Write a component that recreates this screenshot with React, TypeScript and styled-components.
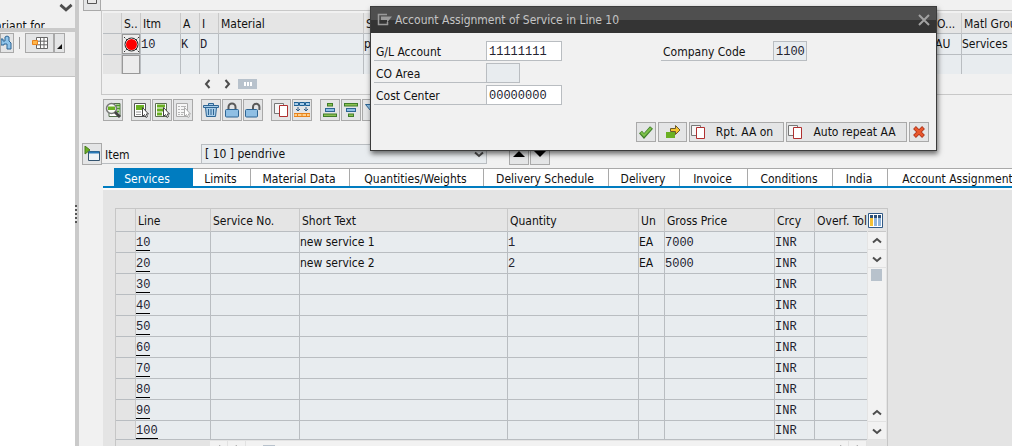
import React from "react";
import styled, { createGlobalStyle, css } from "styled-components";

const LINE = "#b9bdc1";
const sans = `"DejaVu Sans Condensed", "DejaVu Sans", Tahoma, sans-serif`;
const mono = `"Liberation Mono", "Courier New", monospace`;

const GlobalStyle = createGlobalStyle`
  *, *::before, *::after { box-sizing: border-box; }
  body {
    margin: 0;
    background: #f1f1f1;
    color: #111;
    font: 12px/16px ${sans};
    overflow: hidden;
  }
  button, input, select { font: inherit; color: inherit; margin: 0; padding: 0; border-radius: 0; }
  svg { display: block; flex: none; }
`;

/* ---------- page frame ---------- */

const Page = styled.div`
  position: relative;
  display: grid;
  grid-template-columns: 75px 4px minmax(0, 1fr);
  height: 100vh;
  overflow: hidden;
`;

const Sidebar = styled.aside`
  display: flex;
  flex-direction: column;
  background: #fff;
`;

const SideHeader = styled.div`
  display: flex;
  align-items: flex-start;
  justify-content: space-between;
  height: 32px;
  padding-right: 2px;
  border-bottom: 4px solid #cacaca;
  background: #f0f0f0;
  overflow: hidden;
`;

const SideTitle = styled.div`
  display: flex;
  justify-content: flex-end;
  width: 45px;
  padding-top: 18px;
  white-space: nowrap;
  overflow: hidden;
`;

const SideTools = styled.div`
  display: flex;
  align-items: flex-start;
  height: 26px;
  padding-top: 1px;
  background: #f0f0f0;
`;

const SideBand = styled.div`
  height: 19px;
  background: #e2e2e2;
  border-bottom: 1px solid #c4c4c4;
`;

const Separator = styled.div`
  width: 1px;
  height: 12px;
  margin: 4px 5px 0;
  background: #999;
`;

const Splitter = styled.div`
  background: #cacaca;
  padding-top: 205px;
`;

const Grip = styled.div`
  width: 2px;
  height: 18px;
  background: repeating-linear-gradient(#555 0 2px, #e8e8e8 2px 4px);
`;

const Main = styled.main`
  display: flex;
  flex-direction: column;
  background: #f1f1f1;
`;

/* ---------- buttons ---------- */

const ToolButton = styled.button<{ $w?: number; $h?: number }>`
  display: inline-flex;
  align-items: center;
  justify-content: center;
  flex: none;
  width: ${(p) => p.$w ?? 20}px;
  height: ${(p) => p.$h ?? 22}px;
  border: 1px solid #a9a9a9;
  background: #e4e5e6;
`;

const FlatButton = styled.button`
  display: flex;
  align-items: center;
  justify-content: center;
  border: 0;
  background: transparent;
`;

/* ---------- item overview ---------- */

const TopStrip = styled.div`
  display: flex;
  align-items: flex-end;
  height: 11px;
  padding-left: 4px;
  overflow: hidden;
`;

const TopRule = styled.div`
  flex: 1;
  border-bottom: 1px solid #c8c8c8;
`;

const Overview = styled.section`
  margin-left: 22px;
  padding: 2px 0 0 1px;
  border-left: 1px solid #c8c8c8;
  border-bottom: 1px solid #c8c8c8;
  overflow: hidden;
`;

const Grid = styled.table<{ $head: number }>`
  width: 100%;
  table-layout: fixed;
  border-collapse: separate;
  border-spacing: 0;
  white-space: nowrap;

  th, td {
    height: 21px;
    padding: 0;
    overflow: hidden;
    text-align: left;
    font-weight: 400;
    border-right: 1px solid ${LINE};
    border-bottom: 1px solid ${LINE};
    background: #e8ecef;
  }
  thead th {
    height: ${(p) => p.$head}px;
    padding: 1px 0 0 2px;
    background: #e5e5e5;
    border-right-color: #c9c9c9;
  }
  tbody th { background: #e4e4e4; border-right-color: #c9c9c9; }
  th:last-child, td:last-child { border-right: 0; }
  tbody tr:last-child > * { height: 19px; }
`;

const OverviewGrid = styled(Grid)`
  tbody tr:last-child > * { border-bottom: 0; }
`;

const Status = styled.div<{ $h: number }>`
  display: flex;
  align-items: center;
  justify-content: center;
  height: ${(p) => p.$h}px;
  border: 1px solid #999;
  background: #ececec;
`;

const Mono = styled.span`
  font-family: ${mono};
  color: #23232f;
`;

const HScroll = styled.div`
  display: flex;
  align-items: center;
  height: 20px;
  padding-left: 95px;
  button { width: 19px; }
`;

const HThumb = styled.div`
  display: flex;
  align-items: center;
  justify-content: center;
  gap: 1px;
  width: 19px;
  height: 10px;
  margin-left: 2px;
  background: #b8c2cc;
  i { width: 2px; height: 4px; background: #fff; }
`;

/* ---------- toolbar + item selector ---------- */

const Toolbar = styled.div`
  display: flex;
  gap: 8px;
  margin: 4px 0 0 24px;
`;

const ToolGroup = styled.div`
  display: flex;
  gap: 1px;
`;

const ItemRow = styled.div`
  display: flex;
  margin: 22px 0 0 3px;
`;

const ItemLabel = styled.label`
  width: 99px;
  height: 21px;
  padding: 4px 0 0 3px;
  border-bottom: 1px solid ${LINE};
`;

const SelectBox = styled.div`
  display: grid;
  align-items: center;
  width: 286px;
  height: 20px;
  margin: 1px 22px 0 0;
  border: 1px solid ${LINE};
  background: #e8ecef;
  > * { grid-area: 1 / 1; }
  svg { justify-self: end; margin-right: 2px; pointer-events: none; }
`;

const Select = styled.select`
  appearance: none;
  width: 100%;
  height: 18px;
  padding-left: 3px;
  border: 0;
  background: transparent;
`;

/* ---------- tabs ---------- */

const Tabs = styled.nav`
  display: flex;
  margin: 3px 0 0 24px;
  padding-left: 11px;
  border-bottom: 2px solid #007cc0;
  overflow: hidden;
`;

const Tab = styled.button<{ $w: number; $active?: boolean }>`
  flex: none;
  width: ${(p) => p.$w}px;
  height: 18px;
  padding: 2px 2px 0 0;
  border: 0;
  border-top: 1px solid #a9a9a9;
  border-right: 1px solid #a9a9a9;
  background: #fff;
  white-space: nowrap;
  ${(p) =>
    p.$active &&
    css`
      background: #007cc0;
      border-color: #007cc0;
      color: #fff;
      padding-right: 12px;
    `}
`;

const TabPanel = styled.section`
  flex: 1;
  margin-left: 24px;
  padding: 18px 124px 0 12px;
  border-top: 2px solid #fafafa;
  background: #e4e4e4;
`;

const ServiceFrame = styled.div`
  border: 1px solid #c6c6c6;
  border-bottom: 0;
`;

const FrameRow = styled.div`
  display: flex;
`;

const LineLink = styled.a`
  display: inline-block;
  height: 15px;
  line-height: 15px;
  border-bottom: 1px solid #000;
  color: #23232f;
  font-family: ${mono};
  text-decoration: none;
`;

const Rail = styled.div`
  display: flex;
  flex-direction: column;
  flex: none;
  width: 20px;
  padding: 0 1px;
`;

const RailHead = styled.div`
  display: flex;
  align-items: center;
  height: 23px;
  border-bottom: 1px solid #c9c9c9;
`;

const RailTrack = styled.div`
  display: flex;
  flex-direction: column;
  flex: 1;
  background: #f2f2f2;
`;

const RailButton = styled(FlatButton)`
  height: 18px;
  border-bottom: 1px solid #e2e2e2;
`;

const RailThumb = styled.div`
  width: 11px;
  height: 12px;
  margin: 1px auto auto 3px;
  background: #b8c2cc;
`;

const BottomScroll = styled.div`
  display: flex;
  justify-content: space-between;
  height: 18px;
  margin: 1px 20px 0 94px;
  background: #f2f2f2;
`;

const BottomGroup = styled.div`
  display: flex;
  align-items: center;
  button { width: 18px; height: 18px; border-right: 1px solid #e2e2e2; }
`;

const BottomThumb = styled.div`
  width: 12px;
  height: 10px;
  margin-left: 17px;
  background: #b8c2cc;
`;

/* ---------- dialog ---------- */

const Dialog = styled.form`
  position: absolute;
  top: 6px;
  left: 370px;
  width: 567px;
  border: 1px solid #3c3c3c;
  background: #f1f1f1;
  box-shadow: 1px 3px 5px rgba(0, 0, 0, 0.55);
`;

const TitleBar = styled.header`
  display: flex;
  align-items: center;
  height: 26px;
  padding: 0 6px;
  background: linear-gradient(#4f4f4f 0 13px, #343434 13px);
  color: #c4c4c4;
`;

const Title = styled.h1`
  flex: 1;
  margin: 0 0 0 2px;
  font: inherit;
`;

const Fields = styled.div`
  display: grid;
  grid-template-columns: 287px 1fr;
  row-gap: 2px;
  padding: 8px 3px 0;
`;

const Field = styled.div`
  display: flex;
  grid-column-start: 1;
  &:nth-child(2) { grid-column-start: 2; }
`;

const FieldLabel = styled.label`
  width: 112px;
  height: 20px;
  padding: 3px 0 0 2px;
  border-bottom: 1px solid ${LINE};
`;

const FieldInput = styled.input<{ $w: number }>`
  width: ${(p) => p.$w}px;
  height: 20px;
  padding: 1px 0 0 2px;
  border: 1px solid ${LINE};
  background: #fff;
  font-family: ${mono};
  color: #23232f;
  &:read-only { background: #e8ecef; }
`;

const Actions = styled.footer`
  display: flex;
  justify-content: flex-end;
  gap: 2px;
  padding: 17px 7px 8px;
`;

const TextButton = styled(ToolButton)`
  justify-content: flex-start;
  white-space: nowrap;
  span { flex: 1; text-align: center; }
`;

/* ---------- icons ---------- */

type Dir = "up" | "down" | "left" | "right";
const chevrons: Record<Dir, string> = {
  up: "M1 6.5 5 3l4 3.5",
  down: "M1 3.5 5 7l4-3.5",
  left: "M6.5 1 3 5l3.5 4",
  right: "M3.5 1 7 5l-3.5 4",
};
const Chevron = ({ dir, size = 10 }: { dir: Dir; size?: number }) => (
  <svg width={size} height={size} viewBox="0 0 10 10" fill="none" stroke="#4d4d4d" strokeWidth="2">
    <path d={chevrons[dir]} />
  </svg>
);

const Icon = ({ children, w = 16 }: { children: React.ReactNode; w?: number }) => (
  <svg width={w} height="16" viewBox={`0 0 ${w} 16`} fill="none">
    {children}
  </svg>
);

const Cursor = ({ stroke = "#444" }) => (
  <path d="M9.5 5.5v9l2-2 1.500 3 1.500-1-1.200-2.500h2.200z" fill="#fff" stroke={stroke} />
);

const DetailIcon = () => (
  <Icon>
    <path d="M6 1.500h9v13H4V10" fill="#fff" stroke="#55704c" />
    <path d="M11 3.500h4M12 6.500h3M12 9.500h2" stroke="#4f9b27" strokeWidth="2" />
    <circle cx="6.500" cy="6.500" r="5" fill="#f7fbf5" stroke="#777" strokeWidth="1.500" />
    <path d="M3 4.500h7v3.500H3z" fill="#6ab023" />
    <path d="m10 10 5 5" stroke="#444" strokeWidth="3" />
  </Icon>
);

const SelectAllIcon = () => (
  <Icon>
    <path d="M1.500 1.500h11v13h-11z" fill="#fff" stroke="#555" />
    <path d="M3 3h8v5H3z" fill="#6ab023" />
    <path d="M3 10h5M3 12.500h5" stroke="#999" />
    <Cursor />
  </Icon>
);

const SelectBlockIcon = () => (
  <Icon>
    <path d="M1.500 1.500h11v13h-11z" fill="#fff" stroke="#5b6f50" />
    <path d="M3 4h8M3 8h6M3 12h5" stroke="#6ab023" strokeWidth="3" />
    <Cursor />
  </Icon>
);

const DeselectIcon = () => (
  <Icon>
    <path d="M1.500 1.500h11v13h-11z" fill="#f6f6f6" stroke="#aaa" />
    <path d="M3 4.500h2m1 0h5M3 7.500h2m1 0h3M3 10.500h2m1 0h3M3 12.500h2m1 0h2" stroke="#b5b5b5" />
    <Cursor stroke="#aaa" />
  </Icon>
);

const TrashIcon = () => (
  <Icon>
    <path d="M2.500 5.500h11l-1 9h-9z" fill="#a9cde9" stroke="#2d6594" />
    <path d="M.5 3.500h15v2H.5zM5.500 3V1.500h5V3" fill="#a9cde9" stroke="#2d6594" />
    <path d="M5.500 7v6M8 7v6M10.500 7v6" stroke="#2d6594" />
  </Icon>
);

const LockIcon = ({ open = false }) => (
  <Icon>
    <path
      d={open ? "M8 7V5a3.200 3.200 0 0 1 6.400 0v3" : "M4.500 8V5a3.500 3.500 0 0 1 7 0v3"}
      stroke="#5a5a5a"
      strokeWidth="2"
    />
    <rect x={open ? 0.5 : 1.5} y="7.500" width={open ? 12 : 13} height="7.500" rx="1" fill="#8fbfe4" stroke="#2d6594" />
  </Icon>
);

const CopyIcon = () => (
  <Icon>
    <path d="M6 11.500H1.500v-10h9V3" fill="#f6f6f6" stroke="#777" />
    <path d="M6.500 3.500h8v11h-8z" fill="#fff" stroke="#b03030" />
  </Icon>
);

const InsertIcon = () => (
  <Icon>
    <path d="M0 .5h4.500v3H0zm5.500 0h5v3h-5zm6 0H16v3h-4.500z" fill="#a9cde9" stroke="#1d5f93" />
    <path d="M4 5v4M2 7l2 2 2-2M12 5v4M10 7l2 2 2-2" stroke="#2d5b86" />
    <path d="M0 11.500h16v3H0z" fill="#ffd08a" stroke="#e8821c" />
    <path d="M3.500 11v4M8 11v4M12.500 11v4" stroke="#e8821c" />
  </Icon>
);

const SortIcon = ({ desc = false }) => (
  <Icon>
    <g transform={desc ? "matrix(1 0 0 -1 0 16)" : undefined}>
      <rect x="5.500" y="1.500" width="5" height="2.500" fill="#8cc152" stroke="#3f7d2a" />
      <rect x="3.500" y="6.500" width="9" height="3" fill="#8fbfe4" stroke="#2d6594" />
      <rect x="1.500" y="12" width="13" height="2.500" fill="#8cc152" stroke="#3f7d2a" />
    </g>
  </Icon>
);

const FilterIcon = () => (
  <Icon>
    <path d="M1.500 2.500h13l-5 6v6l-3-2v-4z" fill="#8fbfe4" stroke="#2d6594" />
  </Icon>
);

const HeaderDataIcon = () => (
  <Icon>
    <path d="M1 0v8l5-4z" fill="#6ab023" stroke="#477b1c" />
    <path d="M4.500 5.500h11v9h-11z" fill="#f1f3f5" stroke="#33536f" />
    <path d="M5 6.500h10" stroke="#2a7ab8" strokeWidth="2" />
  </Icon>
);

const FindIcon = () => (
  <svg width="12" height="16" viewBox="0 0 12 16">
    <path d="M0 4h2v2h2V2l2-1 2 1v4l2 2v6H6V9H3v1H0z" fill="#8fc4ea" stroke="#2d6594" />
  </svg>
);

const LayoutIcon = () => (
  <Icon>
    <path d="M4.500 2.500h11v11h-11zM8.500 2v12M12 2v12M4 6.200h12M4 9.800h12" fill="#fff" stroke="#666" />
    <path d="M.5 5.500h5v4h-5z" fill="#ffb74a" stroke="#e8821c" />
  </Icon>
);

const ErrorLight = () => (
  <svg width="17" height="17" viewBox="0 0 17 17">
    <path d="M1 1l3 3M16 1l-3 3M1 16l3-3M16 16l-3-3" stroke="#333" strokeDasharray="1.500 1" />
    <circle cx="8.500" cy="8.500" r="6.500" fill="#fff" stroke="#222" />
    <circle cx="8.500" cy="8.500" r="5.500" fill="#f00" />
  </svg>
);

const BoxIcon = () => (
  <Icon>
    <path d="M3.500 2.500h9v9h-9z" fill="#e9e9e9" stroke="#555" />
  </Icon>
);

const Triangle = ({ down = false }) => (
  <svg width="12" height="6" viewBox="0 0 12 6">
    <path d={down ? "M0 0h12L6 6z" : "M0 6h12L6 0z"} fill="#000" />
  </svg>
);

const ConfigIcon = () => (
  <svg width="15" height="15" viewBox="0 0 15 15">
    <path d="M.5.5h14v14H.5z" fill="#fff" stroke="#315a86" />
    <path d="M2 2h3v3H2zm4 0h3v3H6zm4 0h3v3h-3z" fill="#2b4f78" />
    <path d="M2 5h3v8H2z" fill="#f5c033" />
    <path d="M6 5h3v8H6zm4 0h3v8h-3z" fill="#8fb3d9" />
  </svg>
);

const CheckIcon = () => (
  <Icon>
    <path d="m2.500 8 3.500 4L13.500 3.500" stroke="#3f7d2a" strokeWidth="4" />
    <path d="m3 8.300 3 3.200L13 4" stroke="#7cc04a" strokeWidth="2.200" />
  </Icon>
);

const ContinueIcon = () => (
  <Icon>
    <path d="M1 8h9v6H1z" fill="#6ab023" />
    <path d="M5.500 4.500h5v-3l4.500 4.500-4.500 4.500v-3h-5z" fill="#f7c431" stroke="#6b5a2a" />
  </Icon>
);

const CancelIcon = () => (
  <Icon>
    <path d="m3.500 3.500 9 9m0-9-9 9" stroke="#a8321a" strokeWidth="4" />
    <path d="m4 4 8 8m0-8-8 8" stroke="#e8572c" strokeWidth="2.500" />
  </Icon>
);

const WindowIcon = () => (
  <Icon>
    <path d="M10 2.500H1.500v10h9V10" stroke="#9a9a9a" strokeWidth="1.500" />
    <path d="M4 4.500h11L10 10.500V8H4z" fill="#9a9a9a" />
  </Icon>
);

const CloseIcon = () => (
  <svg width="12" height="12" viewBox="0 0 12 12" stroke="#a2a2a2" strokeWidth="2">
    <path d="m1 1 10 10M11 1 1 11" />
  </svg>
);

/* ---------- data ---------- */

const toolGroups: [string, React.ReactNode][][] = [
  [["Details", <DetailIcon />]],
  [
    ["Select all", <SelectAllIcon />],
    ["Select block", <SelectBlockIcon />],
    ["Deselect all", <DeselectIcon />],
  ],
  [
    ["Delete", <TrashIcon />],
    ["Lock", <LockIcon />],
    ["Unlock", <LockIcon open />],
  ],
  [
    ["Copy", <CopyIcon />],
    ["Insert", <InsertIcon />],
  ],
  [
    ["Sort ascending", <SortIcon />],
    ["Sort descending", <SortIcon desc />],
    ["Filter", <FilterIcon />],
  ],
];

const tabs: [string, number][] = [
  ["Services", 79],
  ["Limits", 58],
  ["Material Data", 99],
  ["Quantities/Weights", 134],
  ["Delivery Schedule", 125],
  ["Delivery", 71],
  ["Invoice", 68],
  ["Conditions", 85],
  ["India", 55],
  ["Account Assignment", 142],
];

const services = Array.from({ length: 10 }, (_, i) => ({
  line: (i + 1) * 10,
  text: ["new service 1", "new service 2"][i],
  qty: ["1", "2"][i],
  unit: i < 2 ? "EA" : "",
  price: ["7000", "5000"][i],
}));

/* ---------- sections ---------- */

const SidePane = () => (
  <Sidebar>
    <SideHeader>
      <SideTitle>ariant for</SideTitle>
      <FlatButton type="button" aria-label="Collapse">
        <Chevron dir="down" size={14} />
      </FlatButton>
    </SideHeader>
    <SideTools>
      <ToolButton type="button" aria-label="Find" $w={14} $h={20}>
        <FindIcon />
      </ToolButton>
      <Separator />
      <ToolButton type="button" aria-label="Layout" $w={29} $h={20}>
        <LayoutIcon />
      </ToolButton>
      <ToolButton type="button" aria-label="Layout options" $w={11} $h={20}>
        <svg width="5" height="14" viewBox="0 0 5 14">
          <path d="M5 8v5H0z" fill="#111" />
        </svg>
      </ToolButton>
    </SideTools>
    <SideBand />
  </Sidebar>
);

const ItemOverview = () => (
  <Overview>
    <OverviewGrid $head={21}>
      <colgroup>
        {[19, 19, 40, 19, 19, 145, 571, 27].map((w, i) => (
          <col key={i} width={w} />
        ))}
        <col />
      </colgroup>
      <thead>
        <tr>
          <th />
          <th>S..</th>
          <th>Itm</th>
          <th>A</th>
          <th>I</th>
          <th>Material</th>
          <th>Short Text</th>
          <th>O...</th>
          <th>Matl Group</th>
        </tr>
      </thead>
      <tbody>
        <tr>
          <th />
          <td>
            <Status $h={20}>
              <ErrorLight />
            </Status>
          </td>
          <td><Mono>10</Mono></td>
          <td><Mono>K</Mono></td>
          <td><Mono>D</Mono></td>
          <td />
          <td>pendrive</td>
          <td>AU</td>
          <td>Services</td>
        </tr>
        <tr>
          <th />
          <td>
            <Status $h={19} />
          </td>
          <td /><td /><td /><td /><td /><td /><td />
        </tr>
      </tbody>
    </OverviewGrid>
    <HScroll>
      <FlatButton type="button" aria-label="Scroll left"><Chevron dir="left" /></FlatButton>
      <FlatButton type="button" aria-label="Scroll right"><Chevron dir="right" /></FlatButton>
      <HThumb><i /><i /><i /></HThumb>
    </HScroll>
  </Overview>
);

const ServiceTable = () => (
  <ServiceFrame>
    <FrameRow>
      <Grid $head={23}>
        <colgroup>
          {[20, 75, 89, 208, 131, 26, 110, 40].map((w, i) => (
            <col key={i} width={w} />
          ))}
          <col />
        </colgroup>
        <thead>
          <tr>
            <th />
            <th>Line</th>
            <th>Service No.</th>
            <th>Short Text</th>
            <th>Quantity</th>
            <th>Un</th>
            <th>Gross Price</th>
            <th>Crcy</th>
            <th>Overf. Tol.</th>
          </tr>
        </thead>
        <tbody>
          {services.map((s) => (
            <tr key={s.line}>
              <th />
              <td><LineLink href={`#line-${s.line}`}>{s.line}</LineLink></td>
              <td />
              <td>{s.text}</td>
              <td><Mono>{s.qty}</Mono></td>
              <td>{s.unit}</td>
              <td><Mono>{s.price}</Mono></td>
              <td><Mono>INR</Mono></td>
              <td />
            </tr>
          ))}
        </tbody>
      </Grid>
      <Rail>
        <RailHead>
          <FlatButton type="button" aria-label="Configure columns"><ConfigIcon /></FlatButton>
        </RailHead>
        <RailTrack>
          <RailButton type="button" aria-label="Scroll to top"><Chevron dir="up" /></RailButton>
          <RailButton type="button" aria-label="Line down"><Chevron dir="down" /></RailButton>
          <RailThumb />
          <RailButton type="button" aria-label="Line up"><Chevron dir="up" /></RailButton>
          <RailButton type="button" aria-label="Scroll to bottom"><Chevron dir="down" /></RailButton>
        </RailTrack>
      </Rail>
    </FrameRow>
    <BottomScroll>
      <BottomGroup>
        <FlatButton type="button" aria-label="Columns left"><Chevron dir="left" /></FlatButton>
        <FlatButton type="button" aria-label="Columns right"><Chevron dir="right" /></FlatButton>
        <BottomThumb />
      </BottomGroup>
      <BottomGroup>
        <FlatButton type="button" aria-label="Page left"><Chevron dir="left" /></FlatButton>
        <FlatButton type="button" aria-label="Page right"><Chevron dir="right" /></FlatButton>
      </BottomGroup>
    </BottomScroll>
  </ServiceFrame>
);

const AccountDialog = () => (
  <Dialog role="dialog" aria-labelledby="dialog-title" onSubmit={(e) => e.preventDefault()}>
    <TitleBar>
      <WindowIcon />
      <Title id="dialog-title">Account Assignment of Service in Line 10</Title>
      <FlatButton type="button" aria-label="Close"><CloseIcon /></FlatButton>
    </TitleBar>
    <Fields>
      <Field>
        <FieldLabel htmlFor="gl">G/L Account</FieldLabel>
        <FieldInput id="gl" $w={76} defaultValue="11111111" />
      </Field>
      <Field>
        <FieldLabel htmlFor="company">Company Code</FieldLabel>
        <FieldInput id="company" $w={34} defaultValue="1100" readOnly />
      </Field>
      <Field>
        <FieldLabel htmlFor="area">CO Area</FieldLabel>
        <FieldInput id="area" $w={34} readOnly />
      </Field>
      <Field>
        <FieldLabel htmlFor="center">Cost Center</FieldLabel>
        <FieldInput id="center" $w={76} defaultValue="00000000" />
      </Field>
    </Fields>
    <Actions>
      <ToolButton type="submit" aria-label="Continue" $h={20}><CheckIcon /></ToolButton>
      <ToolButton type="button" aria-label="Next item" $w={29} $h={20}><ContinueIcon /></ToolButton>
      <TextButton type="button" $w={95} $h={20}><CopyIcon /><span>Rpt. AA on</span></TextButton>
      <TextButton type="button" $w={121} $h={20}><CopyIcon /><span>Auto repeat AA</span></TextButton>
      <ToolButton type="button" aria-label="Cancel" $h={20}><CancelIcon /></ToolButton>
    </Actions>
  </Dialog>
);

export default function App() {
  return (
    <>
      <GlobalStyle />
      <Page>
        <SidePane />
        <Splitter><Grip /></Splitter>
        <Main>
          <TopStrip>
            <ToolButton type="button" aria-label="Expand header" $w={18}><BoxIcon /></ToolButton>
            <TopRule />
          </TopStrip>
          <ItemOverview />
          <Toolbar>
            {toolGroups.map((group, i) => (
              <ToolGroup key={i}>
                {group.map(([label, icon]) => (
                  <ToolButton key={label} type="button" aria-label={label}>{icon}</ToolButton>
                ))}
              </ToolGroup>
            ))}
          </Toolbar>
          <ItemRow>
            <ToolButton type="button" aria-label="Collapse item detail"><HeaderDataIcon /></ToolButton>
            <ItemLabel htmlFor="item">Item</ItemLabel>
            <SelectBox>
              <Select id="item">
                <option>[ 10 ] pendrive</option>
              </Select>
              <Chevron dir="down" />
            </SelectBox>
            <ToolGroup>
              <ToolButton type="button" aria-label="Previous item"><Triangle /></ToolButton>
              <ToolButton type="button" aria-label="Next item"><Triangle down /></ToolButton>
            </ToolGroup>
          </ItemRow>
          <Tabs>
            {tabs.map(([name, w], i) => (
              <Tab key={name} type="button" $w={w} $active={i === 0}>{name}</Tab>
            ))}
          </Tabs>
          <TabPanel>
            <ServiceTable />
          </TabPanel>
        </Main>
        <AccountDialog />
      </Page>
    </>
  );
}
